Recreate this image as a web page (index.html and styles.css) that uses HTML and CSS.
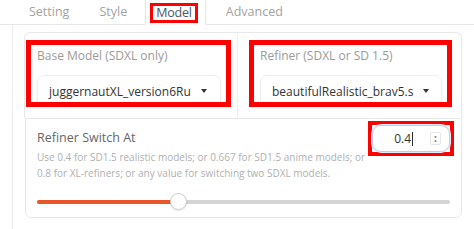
FILE: index.html
```html
<!DOCTYPE html>
<html lang="en">

<head>
    <meta charset="UTF-8">
    <title>Model</title>
    <link rel="stylesheet" href="styles.css">
</head>

<body>
    <div class="tabs">
        <div class="tab">Setting</div>
        <div class="tab">Style</div>
        <div class="tab selected"><span class="mark">Model</span></div>
        <div class="tab">Advanced</div>
    </div>
    <div class="panel">
        <div class="row-card">
            <div class="col col-left">
                <div class="mark-box base-box">
                    <div class="label">Base Model (SDXL only)</div>
                    <div class="dropdown"><span>juggernautXL_version6Ru</span><span class="caret"></span></div>
                </div>
            </div>
            <div class="col col-right">
                <div class="mark-box refiner-box">
                    <div class="label">Refiner (SDXL or SD 1.5)</div>
                    <div class="dropdown"><span>beautifulRealistic_brav5.s</span><span class="caret"></span></div>
                </div>
            </div>
        </div>
        <div class="slider-card">
            <div class="slider-head">
                <div class="slider-text">
                    <div class="slider-title">Refiner Switch At</div>
                    <div class="info">Use 0.4 for SD1.5 realistic models; or 0.667 for SD1.5 anime models; or 0.8 for XL-refiners; or any value for switching two SDXL models.</div>
                </div>
                <div class="num-mark">
                    <div class="num-input"><span class="num-val">0.4</span><span class="cursor"></span><span class="spin">:</span></div>
                </div>
            </div>
            <div class="track">
                <div class="fill"></div>
                <div class="thumb"></div>
            </div>
        </div>
    </div>
</body>

</html>
```

FILE: styles.css
```css
* {
    margin: 0;
    padding: 0;
    box-sizing: border-box
}

body {
    width: 474px;
    height: 229px;
    overflow: hidden;
    background: #fff;
    font-family: "Open Sans", sans-serif;
    color: #374151
}

.tabs {
    display: flex;
    height: 25px;
    padding-left: 17px;
    border-bottom: 1px solid #e8e8e8
}

.tab {
    padding: 0 12px;
    font-size: 12.5px;
    line-height: 24px;
    color: #a3a3a3;
    margin-right: 6px
}

.selected {
    border: 1px solid #e8e8e8;
    border-bottom-color: #fff;
    border-top: none;
    height: 25px;
    padding: 3px 7px 0 4px;
    margin-right: 8px;
    line-height: 16px
}

.mark {
    display: inline-block;
    border: 3px solid #f00;
    padding: 0 3px;
    color: #4b5563;
    line-height: 14px;
    letter-spacing: -0.2px
}

.panel {
    margin-left: 12px;
    border-left: 1px solid #eee;
    padding: 7px 12px 0 11px;
    height: 204px
}

.row-card {
    display: flex;
    width: 438px;
    height: 86px;
    border: 1px solid #e8e8e8;
    border-bottom: none;
    border-radius: 6px 6px 0 0
}

.col {
    padding-top: 7px
}

.col-left {
    width: 213px;
    border-right: 1px solid #eee;
    padding-left: 1px
}

.col-right {
    flex: 1;
    padding-left: 11px
}

.mark-box {
    border: 5px solid #f00;
    height: 67px;
    overflow: hidden;
    padding: 3px 5px 0 6px
}

.base-box {
    width: 205px
}

.refiner-box {
    width: 203px
}

.label {
    font-size: 12px;
    line-height: 16px;
    color: #9a9a9a
}

.dropdown {
    display: flex;
    align-items: center;
    gap: 10px;
    margin-top: 11px;
    height: 36px;
    padding: 0 0 4px 11px;
    border: 1px solid #eee;
    border-radius: 7px;
    box-shadow: 0 1px 2px rgba(0, 0, 0, .05);
    font-size: 12px;
    color: #333
}

.caret {
    width: 0;
    height: 0;
    border-left: 3.5px solid transparent;
    border-right: 3.5px solid transparent;
    border-top: 4px solid #333
}

.slider-card {
    width: 437px;
    height: 100px;
    margin-left: 1px;
    border: 1px solid #e8e8e8;
    border-radius: 0 0 6px 6px;
    padding: 2px 7px 0 11px
}

.slider-head {
    display: flex;
    justify-content: space-between
}

.slider-text {
    padding-top: 9px;
    width: 330px
}

.slider-title {
    font-size: 12.5px;
    line-height: 16px;
    color: #666
}

.info {
    margin-top: 3px;
    font-size: 10px;
    line-height: 16px;
    color: #b0b0b0
}

.num-mark {
    border: 4px solid #f00;
    width: 86px;
    height: 35px;
    padding: 0
}

.num-input {
    display: flex;
    align-items: center;
    height: 27px;
    border: 1px solid #b9cfee;
    border-radius: 9px;
    padding: 0 8px 0 0;
    justify-content: flex-end;
    font-size: 12px;
    color: #333;
    box-shadow: 0 0 0 1px #e3ecf8
}

.cursor {
    width: 1px;
    height: 14px;
    background: #333;
    margin: 0 17px 0 1px
}

.spin {
    width: 11px;
    height: 13px;
    border: 1px solid #e5e5e5;
    border-radius: 2px;
    font-size: 10px;
    font-weight: bold;
    line-height: 10px;
    text-align: center;
    color: #666
}

.track {
    position: relative;
    height: 4px;
    margin-top: 19px;
    width: 413px;
    background: #d4d4d4;
    border-radius: 2px
}

.fill {
    width: 141px;
    height: 4px;
    background: #e8562a;
    border-radius: 2px
}

.thumb {
    position: absolute;
    left: 133px;
    top: -7px;
    width: 17px;
    height: 17px;
    border-radius: 50%;
    background: #fff;
    border: 1px solid #ccc;
    box-shadow: 0 1px 2px rgba(0, 0, 0, .1)
}
```
